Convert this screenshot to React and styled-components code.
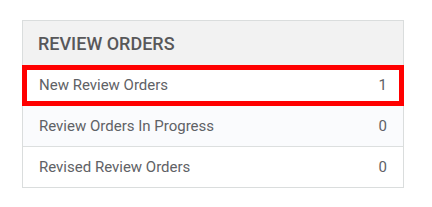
import React from 'react';
import styled, { createGlobalStyle } from 'styled-components';

const GlobalStyle = createGlobalStyle`
	body {
		margin: 0;
		background: #ffffff;
		font-family: Roboto, 'Liberation Sans', Arial, sans-serif;
	}
`;

const Page = styled.div`
	padding: 20px 0 0 22px;
`;

const Panel = styled.div`
	width: 380px;
	border: 1px solid #dadddd;
	background: #ffffff;
`;

const Header = styled.div`
	height: 44px;
	padding: 0 15px;
	display: flex;
	align-items: center;
	background: #f2f2f2;
	color: #58585a;
	font-size: 18px;
	font-weight: 500;
	text-transform: uppercase;
`;

const Row = styled.div`
	position: relative;
	height: 40px;
	padding: 0 16px 0 16px;
	display: flex;
	align-items: center;
	justify-content: space-between;
	font-size: 15px;
	color: #5f6266;
	background: ${({ striped }) => (striped ? '#fafbfd' : '#ffffff')};

	&:not(:last-child) {
		border-bottom: 1px solid #dcdfdf;
	}

	${({ highlighted }) =>
		highlighted &&
		`
		&::after {
			content: '';
			position: absolute;
			top: 0;
			left: -1px;
			right: -1px;
			bottom: -1px;
			border: 5px solid #ff0000;
			pointer-events: none;
		}
	`}
`;

const Count = styled.span`
	color: #5f6266;
`;

const orders = [
	{ label: 'New Review Orders', count: 1, highlighted: true },
	{ label: 'Review Orders In Progress', count: 0 },
	{ label: 'Revised Review Orders', count: 0 },
];

const App = () => (
	<>
		<GlobalStyle />
		<Page>
			<Panel>
				<Header>Review Orders</Header>
				{orders.map((order, i) => (
					<Row key={order.label} striped={i % 2 === 1} highlighted={order.highlighted}>
						<span>{order.label}</span>
						<Count>{order.count}</Count>
					</Row>
				))}
			</Panel>
		</Page>
	</>
);

export default App;
